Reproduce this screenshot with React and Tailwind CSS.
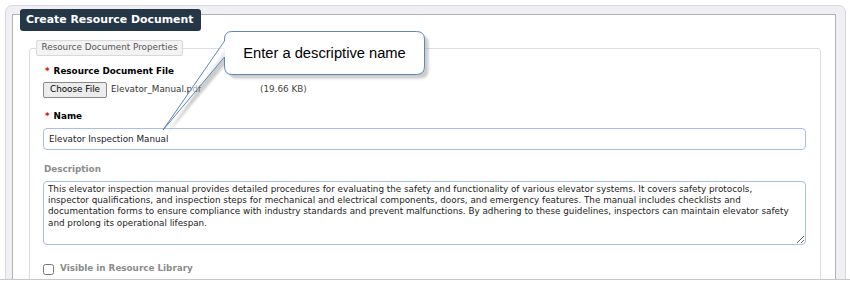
import React from "react";

const desc =
  "This elevator inspection manual provides detailed procedures for evaluating the safety and functionality of various elevator systems. It covers safety protocols,\n" +
  "inspector qualifications, and inspection steps for mechanical and electrical components, doors, and emergency features. The manual includes checklists and\n" +
  "documentation forms to ensure compliance with industry standards and prevent malfunctions. By adhering to these guidelines, inspectors can maintain elevator safety\n" +
  "and prolong its operational lifespan.";

function Callout() {
  const outline =
    "M224.5,41 L224.5,39 Q224.5,31.5 232,31.5 L416.5,31.5 Q424.5,31.5 424.5,39 L424.5,66 Q424.5,74.5 416.5,74.5 L232,74.5 Q224.5,74.5 224.5,66 L224.5,57 L163,130 Z";
  const box =
    "M224.5,39 Q224.5,31.5 232,31.5 L416.5,31.5 Q424.5,31.5 424.5,39 L424.5,66 Q424.5,74.5 416.5,74.5 L232,74.5 Q224.5,74.5 224.5,66 Z";
  const wedge = "M224.5,41 L224.5,57 L163,130 Z";
  return (
    <div className="absolute inset-0 pointer-events-none">
      <svg width="850" height="281" className="absolute left-0 top-0">
        <defs>
          <filter id="sh" x="-10%" y="-10%" width="130%" height="130%">
            <feGaussianBlur stdDeviation="1" />
          </filter>
        </defs>
        <path d={outline} transform="translate(4,4)" fill="#8f8f8f" opacity="0.45" filter="url(#sh)" />
        <path d={box} fill="#ffffff" />
        <path d={wedge} fill="#ffffff" opacity="0.55" />
        <path d={outline} fill="none" stroke="#5f88b8" strokeWidth="1" />
      </svg>
      <div className="absolute left-[225px] top-[32px] w-[199px] h-[42px] flex items-center justify-center font-['Liberation_Sans',Arial,sans-serif] text-[14.7px] text-black">
        Enter a descriptive name
      </div>
    </div>
  );
}

export default function App() {
  return (
    <div className="relative w-[850px] h-[281px] overflow-hidden bg-white font-['DejaVu_Sans',Verdana,sans-serif] text-[8.8px] text-[#222]">
      <div className="h-[280px] border-b border-[#c8c8c8] overflow-hidden">
        <div className="ml-[5px] mt-[5px] mr-[4px] h-[330px] rounded-[7px] border border-[#d7d7de] bg-[#f0f0f4] pl-[6px] pr-[9px] pt-[8px]">
          <div className="h-[400px] border border-[#b2b2b2] bg-white">
            <div className="ml-[7px] -mt-[6px] flex h-[22px] w-[181px] items-center rounded-[3px] bg-[#253746] pl-[6px] text-[10.9px] font-bold text-white">
              Create Resource Document
            </div>
            <div className="ml-[16px] mr-[14px] mt-[17px] h-[300px] rounded-[3px] border border-[#dedede] pl-[13px] pr-[14px]">
              <div className="-mt-[9px] -ml-[7px] flex h-[16px] w-[147px] items-center justify-center rounded-[2px] border border-[#d9d9d9] bg-[#f3f3f3] text-[#555]">
                Resource Document Properties
              </div>
              <div className="mt-[10px] flex h-[12px] items-center pl-[2px] font-bold text-black">
                <span className="text-[#e00000] mr-[4px]">*</span>
                Resource Document File
              </div>
              <div className="mt-[4px] flex h-[16px] items-center">
                <div className="flex h-[16px] w-[64px] items-center justify-center rounded-[2px] border border-[#8a8a8a] bg-[#ececec] text-black">
                  Choose File
                </div>
                <span className="ml-[4px] w-[149px] text-[#333]">Elevator_Manual.pdf</span>
                <span className="text-[#444]">(19.66 KB)</span>
              </div>
              <div className="mt-[13px] flex h-[12px] items-center pl-[2px] font-bold text-black">
                <span className="text-[#e00000] mr-[4px]">*</span>
                Name
              </div>
              <input
                readOnly
                value="Elevator Inspection Manual"
                className="mt-[5px] block h-[22px] w-full rounded-[4px] border border-[#aabfe2] bg-white px-[5px] text-[8.8px] text-[#222] outline-none"
              />
              <div className="mt-[14px] flex h-[12px] items-center pl-[1px] font-bold text-[#8c8c8c]">
                Description
              </div>
              <textarea
                readOnly
                wrap="off"
                value={desc}
                className="mt-[5px] block h-[64px] w-full resize-y overflow-hidden rounded-[4px] border border-[#aabfe2] bg-white px-[4px] pt-[2px] text-[8.8px] leading-[11.2px] text-[#222] outline-none"
              />
              <div className="mt-[18px] flex h-[12px] items-center">
                <input type="checkbox" className="m-0 h-[11px] w-[11px]" />
                <span className="ml-[6px] font-bold text-[#8c8c8c]">Visible in Resource Library</span>
              </div>
            </div>
          </div>
        </div>
      </div>
      <Callout />
    </div>
  );
}
